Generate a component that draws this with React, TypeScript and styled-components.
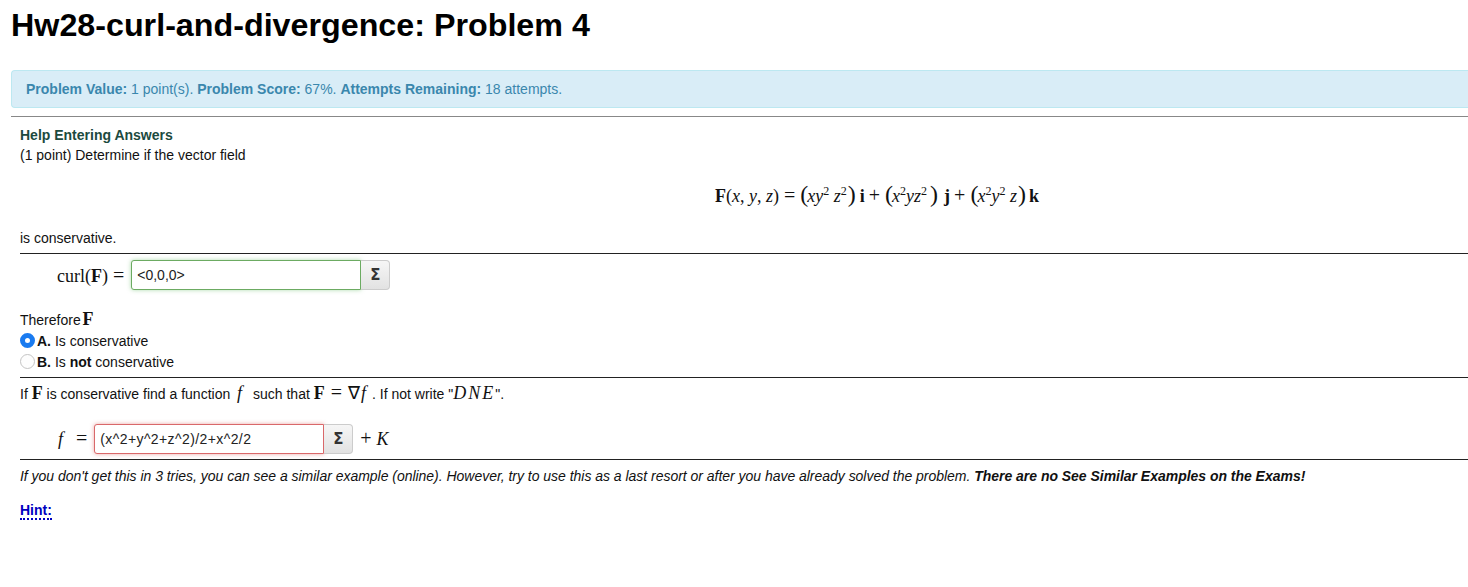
import React from 'react';
import styled, { createGlobalStyle } from 'styled-components';

const GlobalStyle = createGlobalStyle`
  html, body { margin: 0; padding: 0; background: #fff; }
  body {
    font-family: "Liberation Sans", Arial, sans-serif;
    font-size: 14px;
    line-height: 20px;
    color: #111;
    overflow: hidden;
  }
`;

const Page = styled.div`
  width: 1468px;
  height: 587px;
  padding-left: 11px;
  box-sizing: border-box;
`;

const Title = styled.h1`
  margin: 0;
  padding-top: 7px;
  height: 70px;
  box-sizing: border-box;
  font-size: 32.25px;
  line-height: 36px;
  font-weight: 700;
  color: #000;
`;

const ScoreAlert = styled.div`
  height: 38px;
  margin-bottom: 8px;
  box-sizing: border-box;
  display: flex;
  align-items: center;
  padding-left: 14px;
  background: #d9edf7;
  border: 1px solid #bce8f1;
  border-right: 0;
  border-radius: 4px 0 0 4px;
  color: #3a87ad;
  font-size: 14px;
  white-space: pre;
`;

const Rule = styled.hr<{ $tone?: string }>`
  margin: 0;
  border: 0;
  height: 1px;
  background: ${p => p.$tone || '#222'};
`;

const ProblemBody = styled.div`
  padding-left: 9px;
`;

const Line = styled.div<{ $h: number; $end?: boolean }>`
  height: ${p => p.$h}px;
  display: flex;
  align-items: ${p => (p.$end ? 'flex-end' : 'center')};
  white-space: pre;
`;

const HelpLink = styled.b`
  color: #1c4a3e;
`;

const Display = styled.div`
  height: 58px;
  box-sizing: border-box;
  padding: 2px 0 0 695px;
  display: flex;
  align-items: center;
`;

const MathText = styled.span`
  font-family: "Liberation Serif", "Times New Roman", serif;
  font-size: 18px;
  white-space: pre;
  color: #111;
`;

const Eq = styled.span<{ $l?: number; $r?: number }>`
  font-size: 20px;
  margin: 0 ${p => p.$r ?? 5}px 0 ${p => p.$l ?? 5}px;
`;

const Paren = styled.span<{ $l?: number; $r?: number }>`
  font-size: 24px;
  line-height: 20px;
  margin: 0 ${p => p.$r ?? 0}px 0 ${p => p.$l ?? 0}px;
`;

const Sup = styled.sup`
  font-size: 12px;
  line-height: 0;
`;

const Var = styled.i<{ $l?: number; $r?: number; $track?: number }>`
  margin: 0 ${p => p.$r ?? 0}px 0 ${p => p.$l ?? 0}px;
  letter-spacing: ${p => p.$track ?? 0}px;
`;

const Vec = styled.b<{ $l?: number }>`
  margin-left: ${p => p.$l ?? 0}px;
`;

const AnswerRow = styled.div<{ $h: number; $indent: number; $top?: number }>`
  height: ${p => p.$h}px;
  box-sizing: border-box;
  padding-left: ${p => p.$indent}px;
  padding-top: ${p => p.$top ?? 0}px;
  display: flex;
  align-items: center;
`;

const AnswerInput = styled.div<{ $state: 'good' | 'bad'; $w: number; $track?: number }>`
  width: ${p => p.$w}px;
  height: 30px;
  box-sizing: border-box;
  display: flex;
  align-items: center;
  padding-left: 5px;
  font-size: 14px;
  letter-spacing: ${p => p.$track ?? 0}px;
  color: #222;
  background: #fff;
  border-radius: 3px 0 0 3px;
  border: 1px solid ${p => (p.$state === 'good' ? '#6cab62' : '#d9686a')};
  box-shadow: 0 0 4px ${p => (p.$state === 'good' ? 'rgba(92,184,92,.5)' : 'rgba(217,83,79,.5)')};
  margin-left: 2px;
  white-space: pre;
`;

const SigmaButton = styled.div`
  width: 29px;
  height: 30px;
  box-sizing: border-box;
  display: flex;
  align-items: center;
  justify-content: center;
  border: 1px solid #ccc;
  border-left: 0;
  border-radius: 0 4px 4px 0;
  background: linear-gradient(#f6f6f6, #e2e2e2);
  font-family: "DejaVu Sans", sans-serif;
  font-weight: 700;
  font-size: 15px;
  color: #333;
`;

const ChoiceList = styled.div`
  padding-bottom: 5px;
`;

const ChoiceRow = styled.label`
  height: 21px;
  display: flex;
  align-items: center;
  gap: 2px;
  white-space: pre;
`;

const Radio = styled.span<{ $on?: boolean }>`
  width: 15px;
  height: 15px;
  box-sizing: border-box;
  border-radius: 50%;
  flex: none;
  background: ${p => (p.$on ? '#fff' : '#fdfdfd')};
  border: ${p => (p.$on ? '5px solid #1a7bf0' : '1px solid #c4c4c4')};
`;

const Note = styled.div`
  height: 31px;
  display: flex;
  align-items: center;
  font-style: italic;
  letter-spacing: -0.025px;
  white-space: pre;
`;

const Hint = styled.span`
  color: #0000c0;
  font-weight: 700;
  border-bottom: 2px dotted #0000c0;
  line-height: 15px;
`;

const HintRow = styled.div`
  padding-top: 9px;
`;

export default function App() {
  return (
    <Page>
      <GlobalStyle />
      <Title>Hw28-curl-and-divergence: Problem 4</Title>
      <ScoreAlert>
        <b>Problem Value:</b> 1 point(s). <b>Problem Score:</b> 67%. <b>Attempts Remaining:</b> 18 attempts.
      </ScoreAlert>
      <Rule $tone="#888" />
      <ProblemBody>
        <Line $h={28} $end>
          <HelpLink>Help Entering Answers</HelpLink>
        </Line>
        <Line $h={20}>(1 point) Determine if the vector field</Line>
        <Display>
          <MathText>
            <b>F</b>(<i>x</i>, <i>y</i>, <i>z</i>)<Eq>=</Eq>
            <Paren $r={-1}>(</Paren><i>xy</i><Sup>2</Sup> <i>z</i><Sup>2</Sup><Paren $l={1} $r={4}>)</Paren>
            <b>i</b><Eq $l={4}>+</Eq>
            <Paren $r={-1}>(</Paren><i>x</i><Sup>2</Sup><i>yz</i><Sup>2</Sup><Paren $l={3} $r={6}>)</Paren>
            <b>j</b><Eq $l={4}>+</Eq>
            <Paren $r={-1}>(</Paren><i>x</i><Sup>2</Sup><i>y</i><Sup>2</Sup> <i>z</i><Paren $l={1} $r={3}>)</Paren>
            <b>k</b>
          </MathText>
        </Display>
        <Line $h={30}>is conservative.</Line>
        <Rule />
        <AnswerRow $h={42} $indent={37}>
          <MathText>curl(<b>F</b>)<Eq>=</Eq></MathText>
          <AnswerInput $state="good" $w={230}>&lt;0,0,0&gt;</AnswerInput>
          <SigmaButton>Σ</SigmaButton>
        </AnswerRow>
        <Line $h={34} $end>
          <span>Therefore <MathText><Vec $l={-2}>F</Vec></MathText></span>
        </Line>
        <ChoiceList>
          <ChoiceRow><Radio $on /><span><b>A.</b> Is conservative</span></ChoiceRow>
          <ChoiceRow><Radio /><span><b>B.</b> Is <b>not</b> conservative</span></ChoiceRow>
        </ChoiceList>
        <Rule />
        <Line $h={30}>
          <span>If <MathText><b>F</b></MathText> is conservative find a function <MathText><Var $l={3} $r={7}>f</Var></MathText> such that <MathText><b>F</b><Eq $l={6} $r={6}>=</Eq>∇<Var $l={1} $r={6}>f</Var></MathText>. If not write "<MathText><Var $track={2}>DNE</Var></MathText>".</span>
        </Line>
        <AnswerRow $h={51} $indent={37} $top={10}>
          <MathText><Var $l={1} $r={6}>f</Var><Eq $l={7}>=</Eq></MathText>
          <AnswerInput $state="bad" $w={230} $track={0.4}>(x^2+y^2+z^2)/2+x^2/2</AnswerInput>
          <SigmaButton>Σ</SigmaButton>
          <MathText><Eq $l={7}>+</Eq><Var>K</Var></MathText>
        </AnswerRow>
        <Rule />
        <Note>
          <span>If you don't get this in 3 tries, you can see a similar example (online). However, try to use this as a last resort or after you have already solved the problem. <b>There are no See Similar Examples on the Exams!</b></span>
        </Note>
        <HintRow><Hint>Hint:</Hint></HintRow>
      </ProblemBody>
    </Page>
  );
}
